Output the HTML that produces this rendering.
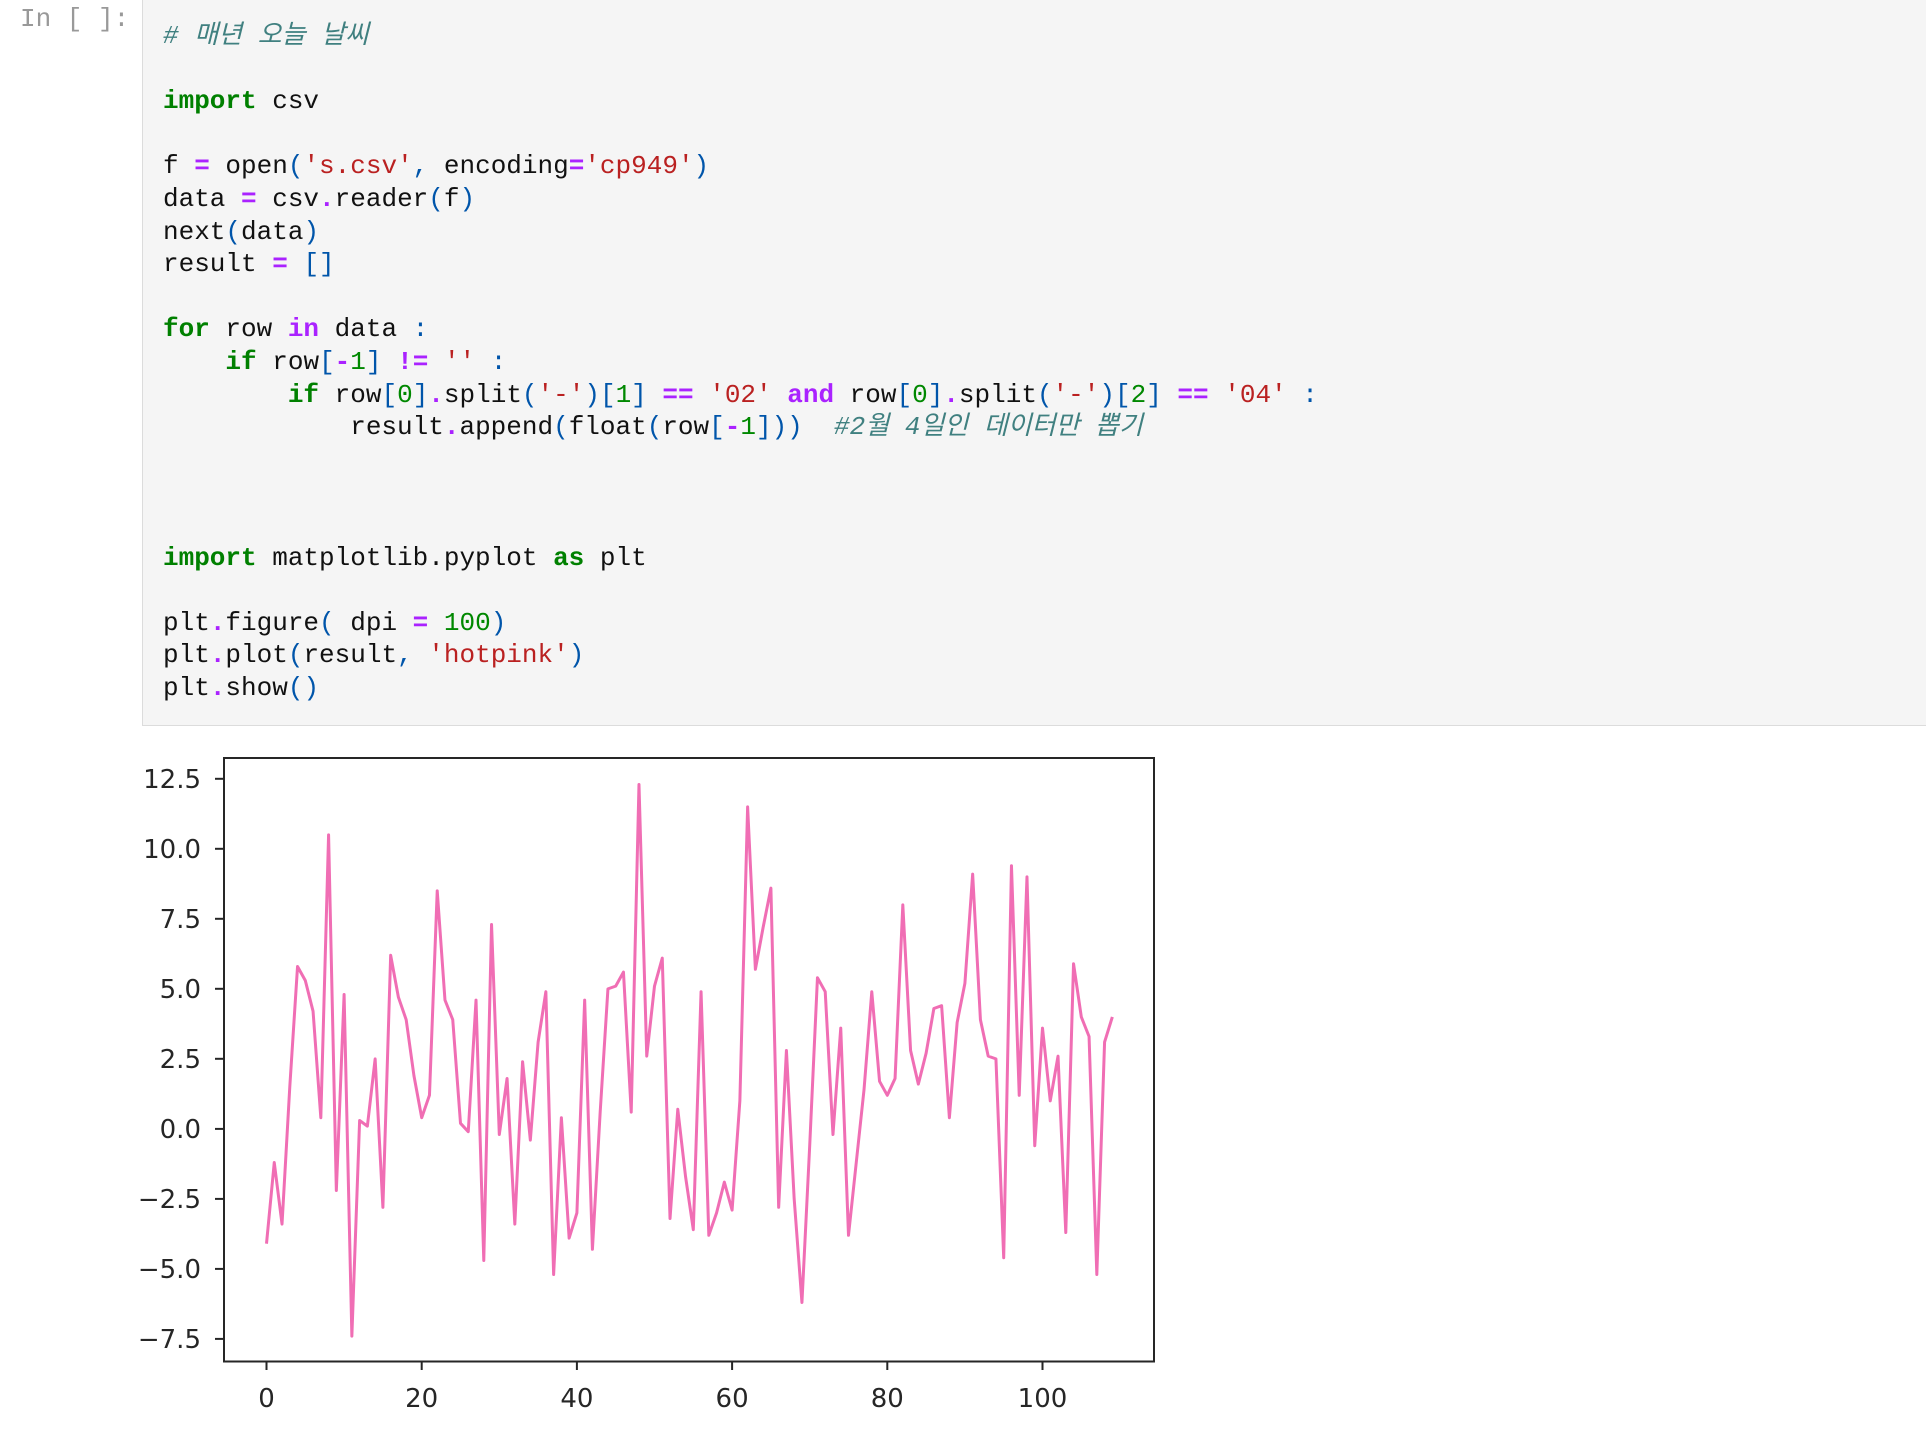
<!DOCTYPE html>
<html><head><meta charset="utf-8"><style>
html,body{margin:0;padding:0;background:#fff;width:1926px;height:1438px;overflow:hidden;position:relative}
.prompt{position:absolute;left:20px;top:3px;font:26px "Liberation Mono",monospace;color:#999;line-height:32px}
.cell{position:absolute;left:142px;top:-2px;width:1800px;height:728px;background:#f5f5f5;border:1.5px solid #dcdcdc;box-sizing:border-box}
.code{position:absolute;left:163px;top:20px;font:26px "Liberation Mono","Noto Sans CJK KR",monospace;color:#111;white-space:normal}
.code div{height:32.6px;line-height:32.6px;white-space:pre}
.k{color:#008000;font-weight:bold}.o{color:#aa22ff;font-weight:bold}.s{color:#ba2121}.n{color:#008800}
.c{color:#408080;font-style:italic;font-family:"Liberation Mono","Noto Sans CJK KR",monospace}.p{color:#0055aa}
svg{position:absolute;left:0;top:0}
svg text{font-family:"DejaVu Sans",sans-serif;font-size:26px;fill:#262626}
</style></head><body>
<div class="prompt">In [ ]:</div>
<div class="cell"></div>
<div class="code"><div><span class="c"># 매년 오늘 날씨</span></div><div> </div><div><span class="k">import</span> csv</div><div> </div><div>f <span class="o">=</span> open<span class="p">(</span><span class="s">'s.csv'</span><span class="p">,</span> encoding<span class="o">=</span><span class="s">'cp949'</span><span class="p">)</span></div><div>data <span class="o">=</span> csv<span class="o">.</span>reader<span class="p">(</span>f<span class="p">)</span></div><div>next<span class="p">(</span>data<span class="p">)</span></div><div>result <span class="o">=</span> <span class="p">[]</span></div><div> </div><div><span class="k">for</span> row <span class="o">in</span> data <span class="p">:</span></div><div>    <span class="k">if</span> row<span class="p">[</span><span class="o">-</span><span class="n">1</span><span class="p">]</span> <span class="o">!=</span> <span class="s">''</span> <span class="p">:</span></div><div>        <span class="k">if</span> row<span class="p">[</span><span class="n">0</span><span class="p">]</span><span class="o">.</span>split<span class="p">(</span><span class="s">'-'</span><span class="p">)[</span><span class="n">1</span><span class="p">]</span> <span class="o">==</span> <span class="s">'02'</span> <span class="o">and</span> row<span class="p">[</span><span class="n">0</span><span class="p">]</span><span class="o">.</span>split<span class="p">(</span><span class="s">'-'</span><span class="p">)[</span><span class="n">2</span><span class="p">]</span> <span class="o">==</span> <span class="s">'04'</span> <span class="p">:</span></div><div>            result<span class="o">.</span>append<span class="p">(</span>float<span class="p">(</span>row<span class="p">[</span><span class="o">-</span><span class="n">1</span><span class="p">]))</span>  <span class="c">#2월 4일인 데이터만 뽑기</span></div><div> </div><div> </div><div> </div><div><span class="k">import</span> matplotlib.pyplot <span class="k">as</span> plt</div><div> </div><div>plt<span class="o">.</span>figure<span class="p">(</span> dpi <span class="o">=</span> <span class="n">100</span><span class="p">)</span></div><div>plt<span class="o">.</span>plot<span class="p">(</span>result<span class="p">,</span> <span class="s">'hotpink'</span><span class="p">)</span></div><div>plt<span class="o">.</span>show<span class="p">()</span></div></div>
<svg width="1926" height="1438" xmlns="http://www.w3.org/2000/svg">
<g transform="translate(266.5,1128.9) scale(7.76,-28)">
<polyline fill="none" stroke="#f06eb4" stroke-width="3" vector-effect="non-scaling-stroke" stroke-linejoin="round" points="0,-4.1 1,-1.2 2,-3.4 3,1.5 4,5.8 5,5.3 6,4.2 7,0.4 8,10.5 9,-2.2 10,4.8 11,-7.4 12,0.3 13,0.1 14,2.5 15,-2.8 16,6.2 17,4.7 18,3.9 19,1.9 20,0.4 21,1.2 22,8.5 23,4.6 24,3.9 25,0.2 26,-0.1 27,4.6 28,-4.7 29,7.3 30,-0.2 31,1.8 32,-3.4 33,2.4 34,-0.4 35,3.1 36,4.9 37,-5.2 38,0.4 39,-3.9 40,-3.0 41,4.6 42,-4.3 43,0.6 44,5.0 45,5.1 46,5.6 47,0.6 48,12.3 49,2.6 50,5.1 51,6.1 52,-3.2 53,0.7 54,-1.7 55,-3.6 56,4.9 57,-3.8 58,-3.0 59,-1.9 60,-2.9 61,1.0 62,11.5 63,5.7 64,7.2 65,8.6 66,-2.8 67,2.8 68,-2.5 69,-6.2 70,-0.6 71,5.4 72,4.9 73,-0.2 74,3.6 75,-3.8 76,-1.2 77,1.4 78,4.9 79,1.7 80,1.2 81,1.8 82,8.0 83,2.8 84,1.6 85,2.7 86,4.3 87,4.4 88,0.4 89,3.8 90,5.2 91,9.1 92,3.9 93,2.6 94,2.5 95,-4.6 96,9.4 97,1.2 98,9.0 99,-0.6 100,3.6 101,1.0 102,2.6 103,-3.7 104,5.9 105,4.0 106,3.3 107,-5.2 108,3.1 109,4.0"/>
</g>
<rect x="224" y="758" width="930" height="603.5" fill="none" stroke="#262626" stroke-width="2"/>
<g stroke="#262626" stroke-width="2">
<line x1="215" y1="778.8" x2="224" y2="778.8"/><line x1="215" y1="848.8" x2="224" y2="848.8"/><line x1="215" y1="918.8" x2="224" y2="918.8"/><line x1="215" y1="988.8" x2="224" y2="988.8"/><line x1="215" y1="1058.8" x2="224" y2="1058.8"/><line x1="215" y1="1128.9" x2="224" y2="1128.9"/><line x1="215" y1="1198.9" x2="224" y2="1198.9"/><line x1="215" y1="1268.9" x2="224" y2="1268.9"/><line x1="215" y1="1338.9" x2="224" y2="1338.9"/>
<line x1="266.5" y1="1361" x2="266.5" y2="1370"/><line x1="421.7" y1="1361" x2="421.7" y2="1370"/><line x1="576.9" y1="1361" x2="576.9" y2="1370"/><line x1="732.1" y1="1361" x2="732.1" y2="1370"/><line x1="887.3" y1="1361" x2="887.3" y2="1370"/><line x1="1042.5" y1="1361" x2="1042.5" y2="1370"/>
</g>
<g text-anchor="end">
<text x="201" y="788">12.5</text><text x="201" y="858">10.0</text><text x="201" y="928">7.5</text><text x="201" y="998">5.0</text><text x="201" y="1068">2.5</text><text x="201" y="1138">0.0</text><text x="201" y="1208">−2.5</text><text x="201" y="1278">−5.0</text><text x="201" y="1348">−7.5</text>
</g>
<g text-anchor="middle">
<text x="266.5" y="1407">0</text><text x="421.7" y="1407">20</text><text x="576.9" y="1407">40</text><text x="732.1" y="1407">60</text><text x="887.3" y="1407">80</text><text x="1042.5" y="1407">100</text>
</g>
</svg>
</body></html>
